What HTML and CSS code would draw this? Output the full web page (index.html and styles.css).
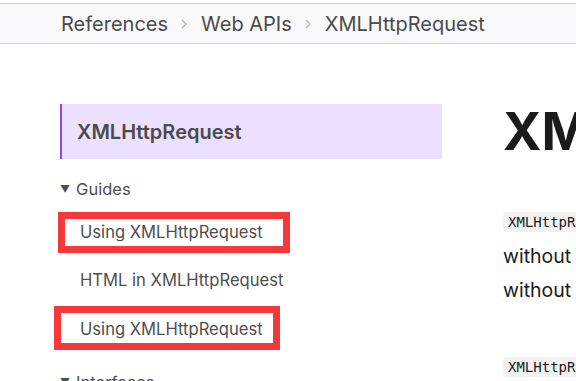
FILE: index.html
```html
<!DOCTYPE html>
<html lang="en">
<head>
    <meta charset="UTF-8">
    <meta name="viewport" content="width=device-width, initial-scale=1.0">
    <title>XMLHttpRequest</title>
    <link rel="stylesheet" href="styles.css">
</head>
<body>
    <nav class="breadcrumbs">
        <a href="#">References</a>
        <svg class="sep" width="6" height="10" viewBox="0 0 6 10"><polyline points="1,1 5,5 1,9" fill="none" stroke="#b3b3b3" stroke-width="1.2"/></svg>
        <a href="#">Web APIs</a>
        <svg class="sep" width="6" height="10" viewBox="0 0 6 10"><polyline points="1,1 5,5 1,9" fill="none" stroke="#b3b3b3" stroke-width="1.2"/></svg>
        <a href="#">XMLHttpRequest</a>
    </nav>

    <div class="layout">
        <aside class="sidebar">
            <div class="sidebar-title">XMLHttpRequest</div>
            <div class="group"><span class="caret">&#9660;</span>Guides</div>
            <ul class="links">
                <li class="mark mark-1"><a href="#">Using XMLHttpRequest</a></li>
                <li><a href="#">HTML in XMLHttpRequest</a></li>
                <li class="mark mark-2"><a href="#">Using XMLHttpRequest</a></li>
            </ul>
            <div class="group group-next"><span class="caret">&#9660;</span>Interfaces</div>
        </aside>

        <main class="content">
            <h1>XMLHttpRequest</h1>
            <p class="first"><code>XMLHttpRequest</code> (XHR) objects are used to interact with servers. You can retrieve data from a URL<br>without having to do a full page refresh. This enables a Web page to update just part of a page<br>without disrupting what the user is doing.</p>
            <p class="second"><code>XMLHttpRequest</code> is used heavily in AJAX programming.</p>
        </main>
    </div>
</body>
</html>
```

FILE: styles.css
```css
body {
    font-family: Inter, "Noto Sans", sans-serif;
    margin: 0;
    overflow: hidden;
    color: #1b1b1b;
}
a {
    color: inherit;
    text-decoration: none;
}
.breadcrumbs {
    margin-top: 3px;
    height: 39px;
    border-top: 1px solid #d0d0d0;
    border-bottom: 1px solid #d0d0d0;
    background-color: #f9f9fb;
    display: flex;
    align-items: center;
    padding-left: 61px;
    font-size: 20px;
    color: #4a4a4a;
}
.breadcrumbs .sep {
    margin: 0 14px 0 13px;
}
.layout {
    display: flex;
    padding-top: 60px;
}
.sidebar {
    flex: 0 0 382px;
    margin-left: 60px;
    color: #4e4e4e;
}
.sidebar-title {
    height: 55px;
    display: flex;
    align-items: center;
    padding-left: 15px;
    border-left: 2px solid #8c43f5;
    background-color: #ebe0ff;
    font-size: 20px;
    font-weight: 600;
    color: #4b4b4b;
}
.group {
    margin-top: 18px;
    height: 24px;
    line-height: 24px;
    font-size: 16.5px;
    display: flex;
    align-items: center;
}
.caret {
    font-size: 10px;
    margin-right: 6px;
}
.group-next {
    margin-top: 17px;
}
.links {
    list-style: none;
    margin: 7px 0 0;
    padding: 0;
}
.links li {
    position: relative;
    height: 48px;
    line-height: 48px;
    padding-left: 20px;
    font-size: 16.6px;
}
.links li + li {
    height: 48.5px;
}
/* annotation boxes drawn over the links */
.mark::before {
    content: "";
    position: absolute;
    border: 7px solid #f5393b;
}
.mark-1::before {
    left: -2px;
    top: 4px;
    width: 218px;
    height: 27px;
}
.mark-2::before {
    left: -6px;
    top: 1px;
    width: 212px;
    height: 30px;
}
.content {
    flex: 0 0 760px;
    margin-left: 61px;
}
.content h1 {
    margin: 0;
    font-size: 52px;
    line-height: 56px;
    font-weight: 700;
}
.content p {
    margin: 0;
    font-size: 19.5px;
    line-height: 34px;
    white-space: nowrap;
}
.content p.first {
    margin-top: 43px;
}
.content p.second {
    margin-top: 41px;
}
code {
    font-family: "DejaVu Sans Mono", monospace;
    font-size: 14px;
    background-color: #f2f1f1;
    border-radius: 4px;
    padding: 2px 5px;
}
```
